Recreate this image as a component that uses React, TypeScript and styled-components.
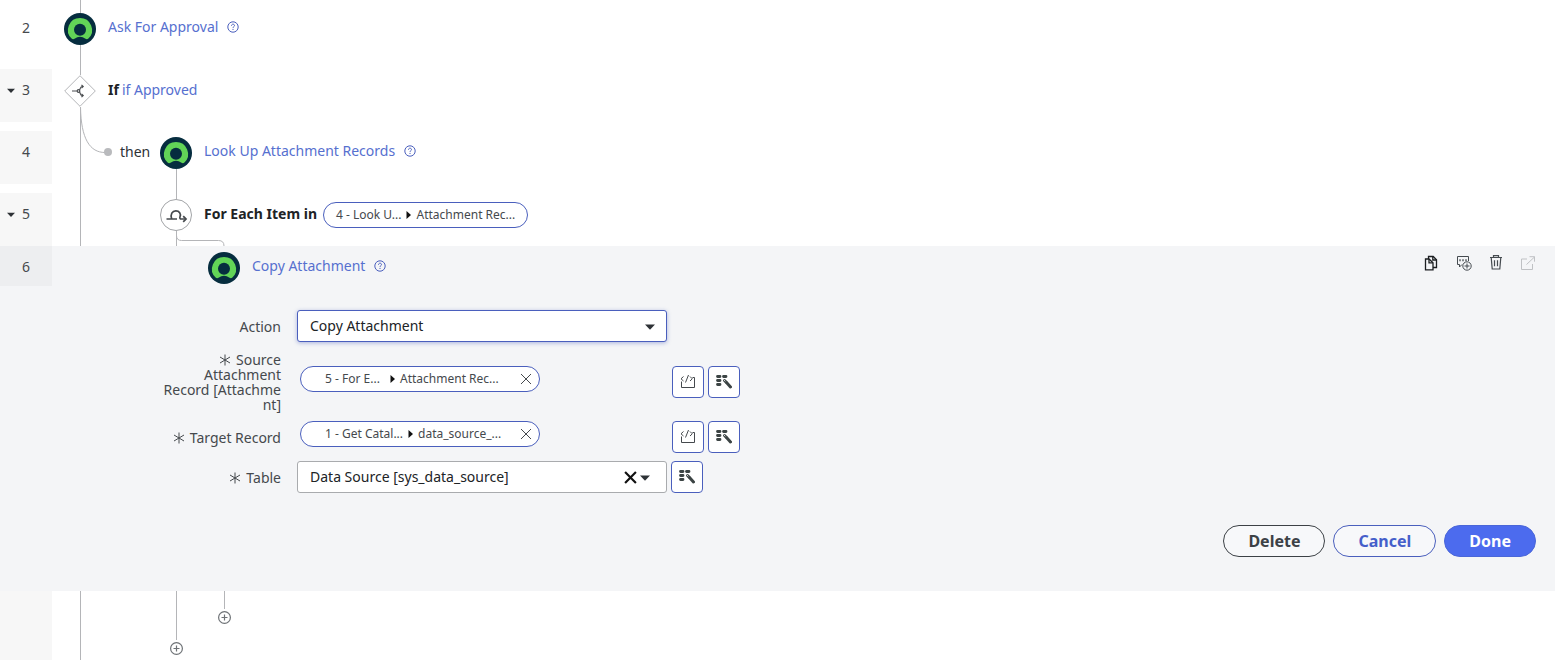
import React from "react";
import styled, { createGlobalStyle, css } from "styled-components";

const GlobalStyle = createGlobalStyle`
  *, *::before, *::after { box-sizing: border-box; }
  body { margin: 0; background: #ffffff; }
  body, button, select {
    font-family: "Noto Sans", "Open Sans", sans-serif;
    font-size: 14px;
    color: #2e3236;
  }
  button { cursor: pointer; }
`;

const lineColor = "#b4b5b8";
const accent = "#4a5fbd";

const Page = styled.main`
  display: flex;
  flex-direction: column;
  min-height: 100vh;
`;

const StepRow = styled.div<{ $height?: number }>`
  display: flex;
  height: ${(p) => p.$height ?? 62}px;
`;

const Gutter = styled.div<{ $tone?: "none" | "light" | "active" | "tail" }>`
  display: flex;
  flex: none;
  align-items: flex-start;
  justify-content: flex-end;
  gap: 7px;
  width: 52px;
  margin-right: 12px;
  padding: 11px 22px 0 0;
  height: ${(p) => (p.$tone === "active" ? "40px" : p.$tone === "tail" ? "auto" : "53px")};
  background: ${(p) =>
    p.$tone === "none" ? "transparent" : p.$tone === "active" ? "#edeef0" : "#f7f7f7"};
  line-height: 20px;
  color: #45494d;
`;

const Toggle = styled.button`
  display: flex;
  align-items: center;
  height: 20px;
  padding: 0;
  border: 0;
  background: none;
`;

const Lane = styled.div<{ $gap?: number }>`
  position: relative;
  display: flex;
  flex: none;
  flex-direction: column;
  width: 32px;
  margin-left: ${(p) => p.$gap ?? 0}px;
`;

const Line = styled.div<{ $height?: number }>`
  width: 1px;
  margin-left: 16px;
  background: ${lineColor};
  ${(p) => (p.$height ? css`height: ${p.$height}px;` : css`flex: 1;`)}
`;

const Lead = styled.div`
  height: 6px;
`;

const Node = styled.svg`
  display: block;
  flex: none;
  width: 32px;
  height: 32px;
`;

const Overlay = styled.svg<{ $top: number }>`
  position: absolute;
  left: 16px;
  top: ${(p) => p.$top}px;
  overflow: visible;
`;

const StepText = styled.div`
  display: flex;
  align-items: center;
  height: 32px;
  margin: 4px 0 0 12px;
  line-height: 20px;
  white-space: nowrap;
`;

const ConditionText = styled(StepText)`
  margin-top: 5px;
`;

const Link = styled.a`
  color: #5670cf;
  text-decoration: none;
`;

const Strong = styled.strong`
  margin-right: 3px;
  font-weight: 700;
  color: #202326;
`;

const Then = styled.span`
  width: 40px;
  margin: 11px 0 0 24px;
  line-height: 20px;
`;

const HelpButton = styled.button`
  display: flex;
  margin: 0 0 0 9px;
  padding: 0;
  border: 0;
  background: none;
`;

const Chip = styled.span<{ $removable?: boolean }>`
  display: flex;
  align-items: center;
  gap: 5px;
  height: 26px;
  width: ${(p) => (p.$removable ? "240px" : "auto")};
  margin: ${(p) => (p.$removable ? "0 0 0 3px" : "2px 0 0 3px")};
  padding: ${(p) => (p.$removable ? "0 7px 0 24px" : "0 12px")};
  border: 1px solid ${accent};
  border-radius: 13px;
  background: #ffffff;
  font-size: 12px;
  line-height: 18px;
  white-space: nowrap;
  color: #45494d;
`;

const ChipStep = styled.span`
  min-width: 60px;
`;

const ChipRemove = styled.button`
  display: flex;
  margin-left: auto;
  padding: 0;
  border: 0;
  background: none;
`;

const Panel = styled.section`
  background: #f4f5f7;
  padding-bottom: 34px;
`;

const Toolbar = styled.div`
  display: flex;
  gap: 16px;
  align-items: center;
  height: 16px;
  margin: 9px 19px 0 auto;
`;

const ToolButton = styled.button`
  display: flex;
  width: 16px;
  height: 16px;
  padding: 0;
  border: 0;
  background: none;
  &:disabled { cursor: default; }
`;

const Form = styled.form`
  display: flex;
  flex-direction: column;
`;

const Fields = styled.div`
  display: flex;
  flex-direction: column;
  gap: 8px;
  padding: 24px 16px 0 163px;
`;

const Field = styled.div`
  display: grid;
  grid-template-columns: 118px 1fr;
  column-gap: 16px;
  align-items: center;
`;

const labelStyle = css`
  padding-top: 1px;
  line-height: 15px;
  text-align: right;
  overflow-wrap: anywhere;
  color: #45494d;
`;

const Label = styled.label`
  ${labelStyle}
`;

const LabelText = styled.span`
  ${labelStyle}
`;

const Star = styled.svg`
  margin-right: 5px;
  vertical-align: -1px;
`;

const Control = styled.div<{ $tall?: boolean }>`
  display: flex;
  align-items: flex-start;
  align-self: start;
  gap: 4px;
  padding: ${(p) => (p.$tall ? "16px 0 15px" : "0")};
`;

const PillSlot = styled.div`
  width: 371px;
`;

const SelectBox = styled.div<{ $focused?: boolean }>`
  position: relative;
  width: 370px;
  height: 32px;
  border: 1px solid ${(p) => (p.$focused ? accent : "#a9abae")};
  border-radius: 3px;
  background: #ffffff;
  box-shadow: ${(p) => (p.$focused ? "0 1px 4px rgba(74, 95, 189, 0.45)" : "none")};
`;

const Select = styled.select`
  appearance: none;
  width: 100%;
  height: 100%;
  padding: 0 60px 2px 12px;
  border: 0;
  outline: 0;
  background: transparent;
  color: #202326;
`;

const Adornments = styled.div<{ $right: number }>`
  position: absolute;
  top: 0;
  bottom: 0;
  right: ${(p) => p.$right}px;
  display: flex;
  align-items: center;
  gap: 3px;
  pointer-events: none;
`;

const ClearButton = styled.button`
  display: flex;
  padding: 0;
  border: 0;
  background: none;
  pointer-events: auto;
`;

const SquareButton = styled.button`
  display: flex;
  align-items: center;
  justify-content: center;
  width: 32px;
  height: 32px;
  padding: 0;
  border: 1px solid ${accent};
  border-radius: 4px;
  background: #ffffff;
`;

const Actions = styled.div`
  display: flex;
  justify-content: flex-end;
  gap: 8px;
  margin-top: 32px;
  padding-right: 19px;
`;

const ActionButton = styled.button<{ $kind: "neutral" | "outline" | "primary" }>`
  height: 32px;
  padding: 0 24px;
  border: 1px solid
    ${(p) => (p.$kind === "neutral" ? "#3c4146" : p.$kind === "outline" ? accent : "#4a66d8")};
  border-radius: 16px;
  background: ${(p) => (p.$kind === "primary" ? "#4c6bee" : "#f7f8fa")};
  color: ${(p) =>
    p.$kind === "neutral" ? "#3c4146" : p.$kind === "outline" ? "#455fca" : "#ffffff"};
  font-size: 16px;
  font-weight: 700;
  line-height: 22px;
`;

const Tail = styled.div`
  display: flex;
  flex: 1;
  min-height: 69px;
`;

const AddButton = styled.button`
  display: flex;
  margin: 2px 0 0 10px;
  padding: 0;
  border: 0;
  background: none;
`;

function NowIcon() {
  return (
    <Node viewBox="0 0 32 32" aria-hidden="true">
      <circle cx="16" cy="16" r="16" fill="#062d3f" />
      <path
        fill="#62d457"
        d="M16 5a12 12 0 0 0-8.400 20.600c.8.700 2 .8 2.900.2a9.500 9.500 0 0 1 11 0c.9.600 2.100.5 2.900-.2A12 12 0 0 0 16 5z"
      />
      <circle cx="16" cy="16.700" r="6" fill="#062d3f" />
    </Node>
  );
}

function IfIcon() {
  return (
    <Node viewBox="0 0 32 32" fill="none" aria-hidden="true">
      <path d="M16 .7 31.300 16 16 31.300.7 16z" fill="#fff" stroke="#b4b5b8" />
      <g stroke="#4a4d50" strokeWidth="1.200">
        <path d="M8 16h5M19 11.500h-1c-2 0-1.500 3-3 4.500 1.500 1.500 1 4.500 3 4.500h1" />
        <circle cx="14.500" cy="16" r="1.300" fill="#fff" />
        <path d="m17.500 9.800 1.700 1.700-1.700 1.700M17.500 18.800l1.700 1.700-1.700 1.700" />
      </g>
    </Node>
  );
}

function LoopIcon() {
  return (
    <Node viewBox="0 0 32 32" fill="none" aria-hidden="true">
      <circle cx="16" cy="16" r="15.500" fill="#fff" stroke="#a2a4a7" />
      <g stroke="#45494d" strokeWidth="1.700">
        <path d="M6.500 20h10.500M11.700 20c-1.700-4.600.6-8.200 4.100-8.200 3.600 0 5.400 3 4.200 6-.5 1.400.1 2.200 1.500 2.200H26" />
        <path d="m23.200 17.200 2.800 2.800-2.800 2.800" />
      </g>
    </Node>
  );
}

function Help() {
  return (
    <HelpButton type="button" aria-label="Help">
      <svg width="12" height="12" viewBox="0 0 12 12" fill="none" stroke="#4a5fbd">
        <circle cx="6" cy="6" r="5.200" />
        <path d="M4.500 4.700c0-2 3-2 3-.1 0 1.100-1.500 1-1.500 2.300M6 7.900v1.100" />
      </svg>
    </HelpButton>
  );
}

function Caret({ width = 10 }: { width?: number }) {
  return (
    <svg width={width} height="8" viewBox="0 0 10 8" aria-hidden="true">
      <path d="M0 2.500h10L5 7.800z" fill="currentColor" />
    </svg>
  );
}

function ChipArrow() {
  return (
    <svg width="5" height="8" viewBox="0 0 5 8" aria-hidden="true">
      <path d="M.5 0l4.500 4-4.500 4z" fill="#111" />
    </svg>
  );
}

function Cross({ size, weight, color }: { size: number; weight: number; color: string }) {
  return (
    <svg width={size} height={size} viewBox="0 0 12 12" stroke={color} strokeWidth={weight}>
      <path d="M1 1l10 10M11 1L1 11" />
    </svg>
  );
}

function Plus() {
  return (
    <AddButton type="button" aria-label="Add step">
      <svg width="13" height="13" viewBox="0 0 13 13" fill="none" stroke="#6e7276">
        <circle cx="6.500" cy="6.500" r="5.900" strokeWidth="1.200" />
        <path d="M3.500 6.500h6M6.500 3.500v6" strokeWidth="1.200" />
      </svg>
    </AddButton>
  );
}

function Required() {
  return (
    <Star width="12" height="12" viewBox="0 0 12 12" stroke="#45494d" role="img" aria-label="Required">
      <path d="M6 .5v11M1 3l10 6M11 3L1 9" />
    </Star>
  );
}

function ScriptButton() {
  return (
    <SquareButton type="button" aria-label="Toggle script">
      <svg width="16" height="16" viewBox="0 0 16 16" fill="none" stroke="#45494d">
        <path d="M1.500 7.500v6h13v-10h-2" />
        <path d="M3.500 2.500 1 4.800 3.500 7M8.500 1l-3 7.500M10 2.500l2.300 2.300L10 7" />
      </svg>
    </SquareButton>
  );
}

function PickerButton() {
  return (
    <SquareButton type="button" aria-label="Data pill picker">
      <svg width="16" height="16" viewBox="0 0 16 16" fill="none" stroke="#3c4444" strokeLinecap="round">
        <path d="M1.500 2.500h2.500M1.500 6.500h2.500M1.500 10.500h2.500M7.500 2.500h2.500" strokeWidth="2.800" />
        <path d="m10.500 8.500 4 4.500" strokeWidth="3" />
        <path d="m8.500 6.500 1.500 1.500" strokeWidth="3" />
        <path d="m8.500 6.500.5.500" stroke="#fff" strokeWidth="1" />
      </svg>
    </SquareButton>
  );
}

function StepNumber({
  n,
  tone,
  expandable,
}: {
  n: number;
  tone: "none" | "light" | "active";
  expandable?: boolean;
}) {
  return (
    <Gutter $tone={tone}>
      {expandable && (
        <Toggle type="button" aria-label={`Collapse step ${n}`}>
          <Caret width={8} />
        </Toggle>
      )}
      {n}
    </Gutter>
  );
}

function DataPill({ step, field, removable }: { step: string; field: string; removable?: boolean }) {
  return (
    <Chip $removable={removable}>
      <ChipStep>{step}</ChipStep>
      <ChipArrow />
      <span>{field}</span>
      {removable && (
        <ChipRemove type="button" aria-label={`Remove ${field}`}>
          <Cross size={12} weight={1} color="#45494d" />
        </ChipRemove>
      )}
    </Chip>
  );
}

export default function App() {
  return (
    <Page>
      <GlobalStyle />

      <StepRow $height={7}>
        <Lane $gap={64}>
          <Line />
        </Lane>
      </StepRow>

      <StepRow>
        <StepNumber n={2} tone="none" />
        <Lane>
          <Line $height={6} />
          <NowIcon />
          <Line />
        </Lane>
        <StepText>
          <Link href="#ask">Ask For Approval</Link>
          <Help />
        </StepText>
      </StepRow>

      <StepRow>
        <StepNumber n={3} tone="light" expandable />
        <Lane>
          <Line $height={6} />
          <IfIcon />
          <Line />
        </Lane>
        <ConditionText>
          <Strong>If</Strong>
          <Link href="#if">if Approved</Link>
        </ConditionText>
      </StepRow>

      <StepRow>
        <StepNumber n={4} tone="light" />
        <Lane>
          <Line />
          <Overlay $top={-24} width="32" height="50" viewBox="0 0 32 50" fill="none">
            <path d="M.5 0C1 32 10 45.500 25 45.500" stroke={lineColor} />
            <circle cx="28" cy="45" r="4" fill="#b9babd" />
          </Overlay>
        </Lane>
        <Then>then</Then>
        <Lane>
          <Lead />
          <NowIcon />
          <Line />
        </Lane>
        <StepText>
          <Link href="#lookup">Look Up Attachment Records</Link>
          <Help />
        </StepText>
      </StepRow>

      <StepRow $height={53}>
        <StepNumber n={5} tone="light" expandable />
        <Lane>
          <Line />
        </Lane>
        <Lane $gap={64}>
          <Line $height={6} />
          <LoopIcon />
          <Line />
          <Overlay $top={38} width="50" height="15" viewBox="0 0 50 15" fill="none">
            <path d="M.5 0v4.500q0 5 5 5h37q5.500 0 5.500 5.500" stroke={lineColor} />
          </Overlay>
        </Lane>
        <ConditionText>
          <Strong>For Each Item in</Strong>
          <DataPill step="4 - Look U..." field="Attachment Rec..." />
        </ConditionText>
      </StepRow>

      <Panel aria-label="Copy Attachment">
        <StepRow $height={40}>
          <StepNumber n={6} tone="active" />
          <Lane $gap={144}>
            <Lead />
            <NowIcon />
          </Lane>
          <StepText>
            <Link href="#copy">Copy Attachment</Link>
            <Help />
          </StepText>
          <Toolbar>
            <ToolButton type="button" aria-label="Duplicate">
              <svg width="16" height="16" viewBox="0 0 16 16" fill="none" stroke="#1c1f22" strokeWidth="1.300">
                <path d="M4.500 4V1.500h4.700l3.300 3.300v7.700H9" />
                <path d="M8.800 1.500V5h3.700" />
                <path d="M1.500 4H5l4 3.800v7H1.500z" />
                <path d="M5 4v3.800h4" />
              </svg>
            </ToolButton>
            <ToolButton type="button" aria-label="Add comment">
              <svg width="16" height="16" viewBox="0 0 16 16" fill="none" stroke="#454b50">
                <path d="M6 9.500 3.500 12V9.500h-2v-8h11V6" />
                <path d="M4 4.200v2M7 4.200v2M10 4.200v2" strokeWidth="1.300" />
                <circle cx="11" cy="11" r="4.200" />
                <path d="M11 8.500v5M8.500 11h5" />
              </svg>
            </ToolButton>
            <ToolButton type="button" aria-label="Delete step">
              <svg width="16" height="16" viewBox="0 0 16 16" fill="none" stroke="#454b50" strokeWidth="1.200">
                <path d="M2 2.500h12M5.500 2.500V.6h5v1.900M3.200 2.500l1 11.500h7.600l1-11.500M6.500 5.300v6M9.500 5.300v6" />
              </svg>
            </ToolButton>
            <ToolButton type="button" aria-label="Open" disabled>
              <svg width="16" height="16" viewBox="0 0 16 16" fill="none" stroke="#bfc1c4">
                <path d="M7 4H1.500v10.500h11V9M6.500 9.500 14.500 2M9.500 1.700h5v5" />
              </svg>
            </ToolButton>
          </Toolbar>
        </StepRow>

        <Form onSubmit={(e) => e.preventDefault()}>
          <Fields>
            <Field>
              <Label htmlFor="action">Action</Label>
              <Control>
                <SelectBox $focused>
                  <Select id="action">
                    <option>Copy Attachment</option>
                  </Select>
                  <Adornments $right={11}>
                    <Caret />
                  </Adornments>
                </SelectBox>
              </Control>
            </Field>

            <Field role="group" aria-labelledby="source">
              <LabelText id="source">
                <Required />
                Source Attachment Record{"\u00a0"}[Attachment]
              </LabelText>
              <Control $tall>
                <PillSlot>
                  <DataPill step="5 - For E..." field="Attachment Rec..." removable />
                </PillSlot>
                <ScriptButton />
                <PickerButton />
              </Control>
            </Field>

            <Field role="group" aria-labelledby="target">
              <LabelText id="target">
                <Required />
                Target Record
              </LabelText>
              <Control>
                <PillSlot>
                  <DataPill step="1 - Get Catal..." field="data_source_..." removable />
                </PillSlot>
                <ScriptButton />
                <PickerButton />
              </Control>
            </Field>

            <Field>
              <Label htmlFor="table">
                <Required />
                Table
              </Label>
              <Control>
                <SelectBox>
                  <Select id="table">
                    <option>Data Source [sys_data_source]</option>
                  </Select>
                  <Adornments $right={16}>
                    <ClearButton type="button" aria-label="Clear table">
                      <Cross size={13} weight={2} color="#111" />
                    </ClearButton>
                    <Caret />
                  </Adornments>
                </SelectBox>
                <PickerButton />
              </Control>
            </Field>
          </Fields>

          <Actions>
            <ActionButton type="button" $kind="neutral">Delete</ActionButton>
            <ActionButton type="button" $kind="outline">Cancel</ActionButton>
            <ActionButton type="submit" $kind="primary">Done</ActionButton>
          </Actions>
        </Form>
      </Panel>

      <Tail>
        <Gutter $tone="tail" />
        <Lane>
          <Line />
        </Lane>
        <Lane $gap={64}>
          <Line $height={49} />
          <Plus />
        </Lane>
        <Lane $gap={16}>
          <Line $height={18} />
          <Plus />
        </Lane>
      </Tail>
    </Page>
  );
}
